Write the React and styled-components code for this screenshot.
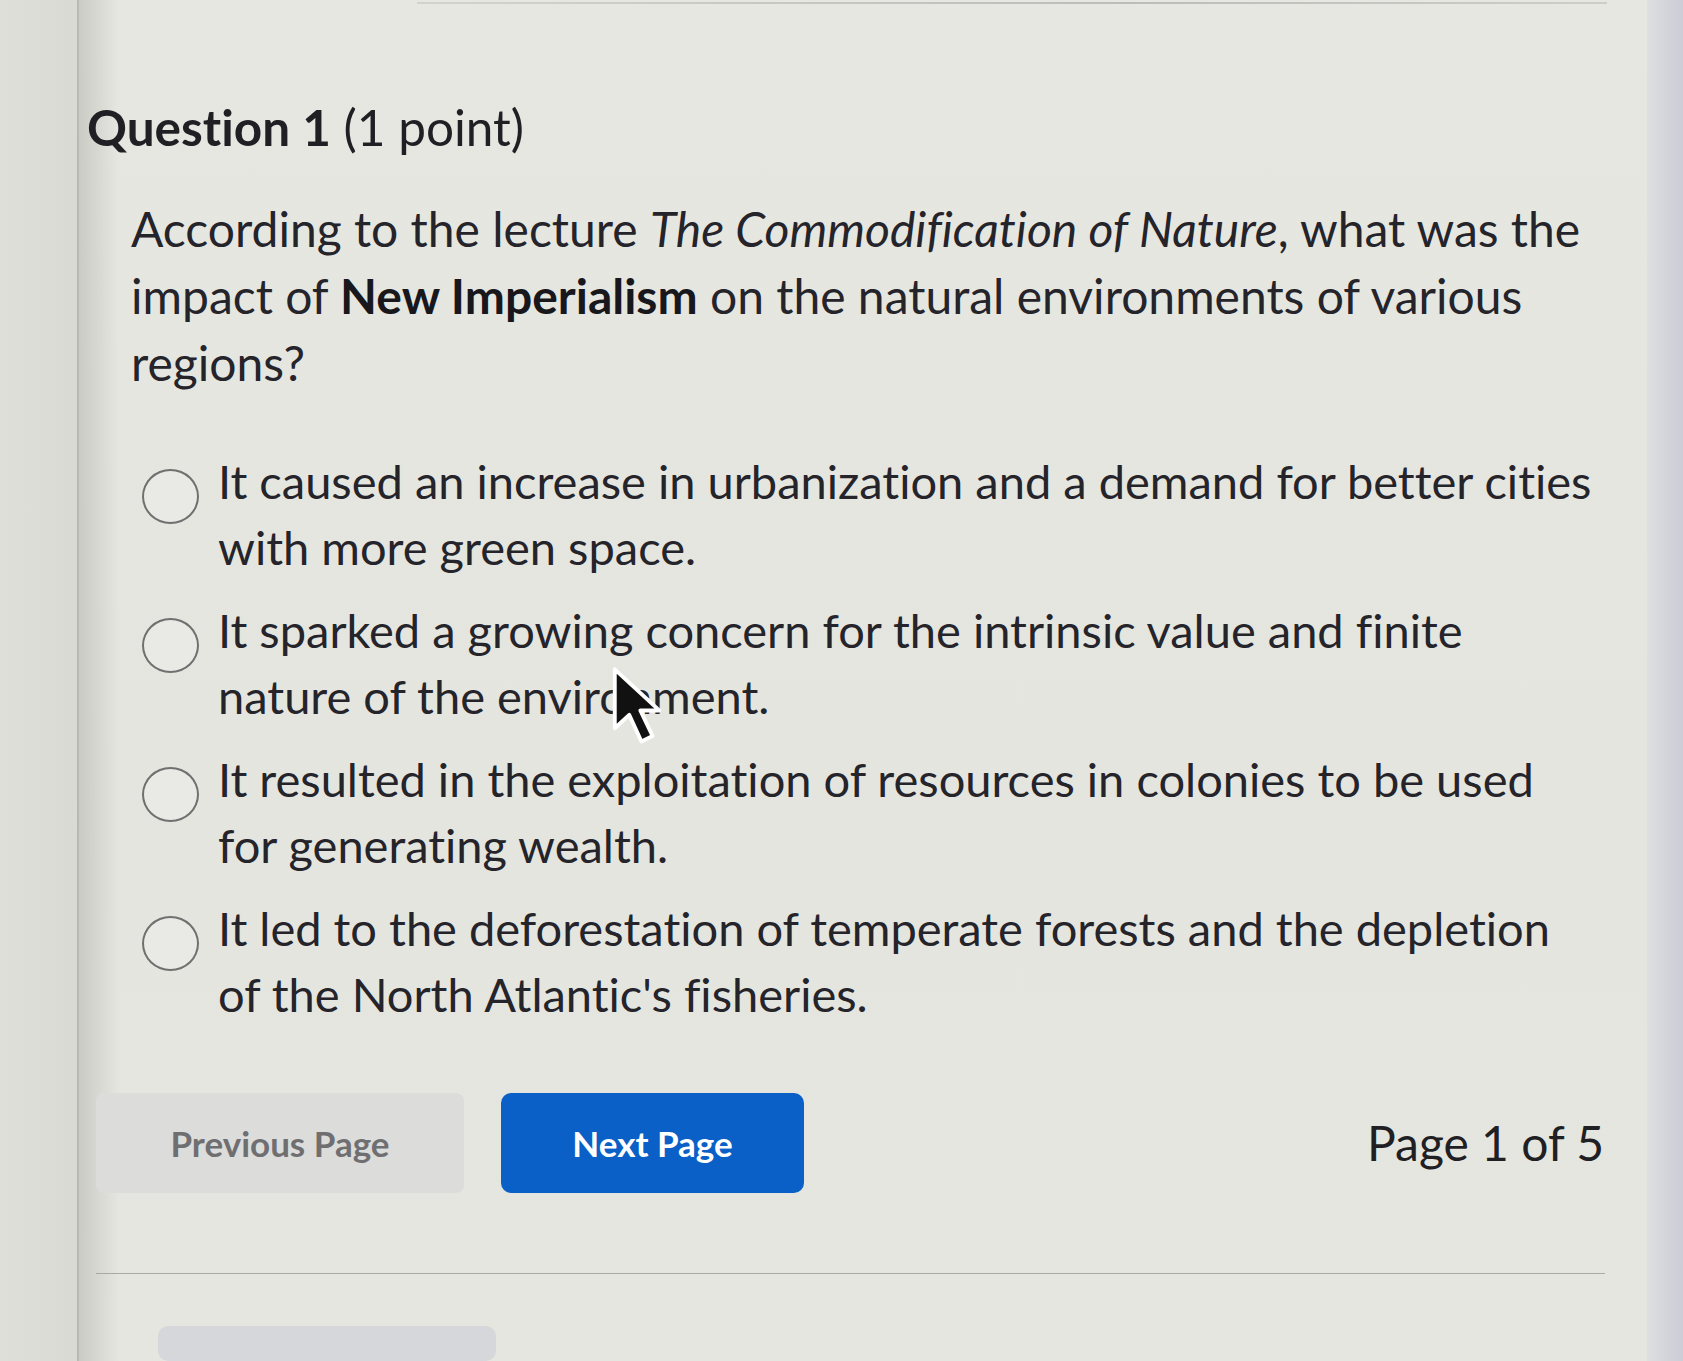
import styled, { createGlobalStyle } from 'styled-components';

const GlobalStyle = createGlobalStyle`
  html, body {
    margin: 0;
    padding: 0;
    background: #dcdcd7;
  }
  body {
    font-family: Lato, "Open Sans", sans-serif;
    font-variant-ligatures: no-common-ligatures;
    color: #24242a;
  }
`;

// each answer is kept on the same two lines as in the quiz
const options = [
  ['It caused an increase in urbanization and a demand for better cities', 'with more green space.'],
  ['It sparked a growing concern for the intrinsic value and finite', 'nature of the environment.'],
  ['It resulted in the exploitation of resources in colonies to be used', 'for generating wealth.'],
  ['It led to the deforestation of temperate forests and the depletion', "of the North Atlantic's fisheries."],
];

const App = () => {
  return (
    <Screen>
      <GlobalStyle />
      <LeftRail />
      <Page>
        <TopRule />
        <Heading>
          <strong>Question 1</strong> (1 point)
        </Heading>
        <Prompt>
          According to the lecture <em>The Commodification of Nature</em>, what was the
          <br />
          impact of <strong>New Imperialism</strong> on the natural environments of various
          <br />
          regions?
        </Prompt>
        <OptionList>
          {options.map(([first, second]) => (
            <Option key={first}>
              <Radio />
              <OptionText>
                {first}
                <br />
                {second}
              </OptionText>
            </Option>
          ))}
        </OptionList>
        <NavRow>
          <PrevButton>Previous Page</PrevButton>
          <NextButton>Next Page</NextButton>
          <PageCount>Page 1 of 5</PageCount>
        </NavRow>
        <Divider />
        <SubmitStub />
        <Cursor viewBox="0 0 46 72">
          <path
            d="M3 3 L3 56 L16 44 L27 68 L37 63 L26 40 L43 40 Z"
            fill="#111"
            stroke="#fff"
            strokeWidth="3.5"
            strokeLinejoin="round"
          />
        </Cursor>
      </Page>
      <RightEdge />
    </Screen>
  );
};

const Screen = styled.div`
  display: flex;
  width: 1683px;
  height: 1361px;
  overflow: hidden;
`;

const LeftRail = styled.div`
  width: 77px;
  flex-shrink: 0;
  background: linear-gradient(90deg, #dfdfda 0%, #dadad5 100%);
  border-right: 2px solid #b9b9b4;
`;

const RightEdge = styled.div`
  width: 36px;
  flex-shrink: 0;
  background: linear-gradient(90deg, #dedfe0 0%, #cbccd6 100%);
`;

const Page = styled.div`
  position: relative;
  flex: 1;
  background:
    linear-gradient(90deg, rgba(170, 170, 164, 0.45) 0px, rgba(170, 170, 164, 0) 40px),
    linear-gradient(180deg, #e7e7e2 0%, #e5e5df 60%, #e6e6e1 100%);
  padding-left: 8px;
  display: flex;
  flex-direction: column;
`;

const TopRule = styled.div`
  margin: 2px 40px 0 330px;
  height: 3px;
  background: linear-gradient(90deg, rgba(180, 180, 176, 0.4), #bcbcb8 60%, rgba(188, 188, 184, 0.6));
`;

const Heading = styled.h1`
  margin: 93px 0 0 0;
  font-size: 49.5px;
  line-height: 60px;
  font-weight: 400;
  color: #1f1f24;

  strong {
    font-weight: 700;
  }
`;

const Prompt = styled.p`
  margin: 38px 0 0 44px;
  font-size: 48px;
  line-height: 67px;
  white-space: nowrap;
  color: #24242a;

  em {
    font-style: italic;
  }

  strong {
    font-weight: 700;
    color: #17171c;
  }
`;

const OptionList = styled.div`
  margin: 52px 0 0 55px;
  display: flex;
  flex-direction: column;
  gap: 17px;
`;

const Option = styled.div`
  display: flex;
  align-items: flex-start;
  gap: 19px;
`;

const Radio = styled.span`
  flex-shrink: 0;
  width: 53px;
  height: 51px;
  margin-top: 21px;
  border-radius: 50%;
  border: 2px solid #707070;
  background: #e9e9e5;
`;

const OptionText = styled.span`
  font-size: 47px;
  line-height: 66px;
  white-space: nowrap;
  color: #24242a;
`;

const NavRow = styled.div`
  margin: 66px 0 0 9px;
  width: 1508px;
  display: flex;
  align-items: center;
  gap: 37px;
`;

const PrevButton = styled.div`
  width: 368px;
  height: 100px;
  border-radius: 8px;
  background: #dcdcda;
  color: #6f6f72;
  font-size: 35px;
  font-weight: 700;
  display: flex;
  align-items: center;
  justify-content: center;
`;

const NextButton = styled.div`
  width: 303px;
  height: 100px;
  border-radius: 10px;
  background: #0a60c6;
  color: #ffffff;
  font-size: 35px;
  font-weight: 700;
  display: flex;
  align-items: center;
  justify-content: center;
`;

const PageCount = styled.div`
  margin-left: auto;
  font-size: 48px;
  color: #1f1f24;
`;

const Divider = styled.div`
  margin: 80px 0 0 9px;
  width: 1509px;
  height: 2px;
  background: #a9a9a5;
`;

const SubmitStub = styled.div`
  margin: 52px 0 0 71px;
  width: 338px;
  height: 60px;
  border-radius: 10px;
  background: #d5d7da;
`;

const Cursor = styled.svg`
  position: absolute;
  left: 532px;
  top: 666px;
  width: 52px;
  height: 80px;
`;

export default App;
